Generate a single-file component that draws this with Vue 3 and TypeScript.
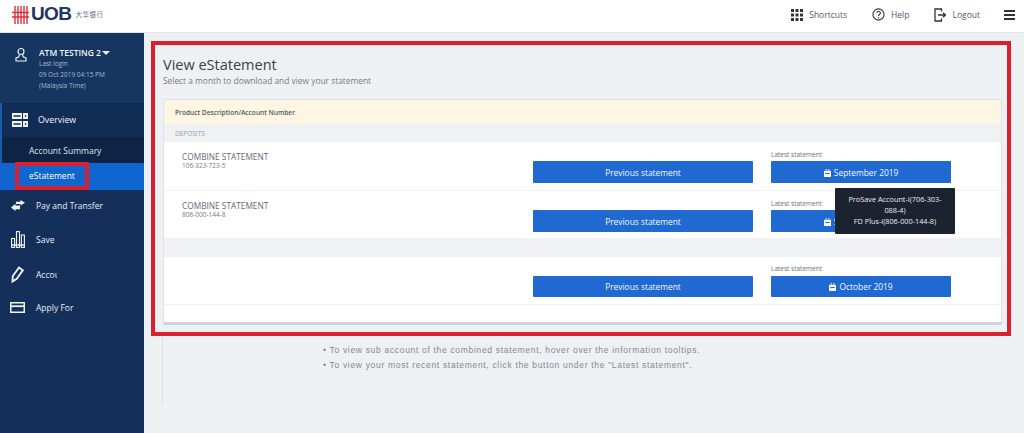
<script setup lang="ts">
interface Row { name: string; num: string; month: string; tip?: boolean }
const rows: Row[] = [
  { name: 'COMBINE STATEMENT', num: '106-323-723-5', month: 'September 2019' },
  { name: 'COMBINE STATEMENT', num: '806-000-144-8', month: 'September 2019', tip: true },
]
const lastRow: Row = { name: '', num: '', month: 'October 2019' }
</script>

<template>
  <div class="page">
    <header class="top">
      <div class="logo">
        <svg width="17" height="18" viewBox="0 0 17 18" class="mark">
          <g stroke="#dc3038" stroke-width="1.400" fill="none">
            <path d="M3 0v18M6 0v18M9 0v18M12 0v18M15 0v18M0 6.500h17M0 11h17" />
          </g>
        </svg>
        <span class="uob">UOB</span>
        <span class="cjk">大华银行</span>
      </div>
      <nav class="tools">
        <span class="tool t1">
          <svg width="12" height="12" viewBox="0 0 12 12" fill="#333">
            <rect x="0" y="0" width="3" height="3" /><rect x="4.500" y="0" width="3" height="3" /><rect x="9" y="0" width="3" height="3" />
            <rect x="0" y="4.500" width="3" height="3" /><rect x="4.500" y="4.500" width="3" height="3" /><rect x="9" y="4.500" width="3" height="3" />
            <rect x="0" y="9" width="3" height="3" /><rect x="4.500" y="9" width="3" height="3" /><rect x="9" y="9" width="3" height="3" />
          </svg>
          Shortcuts
        </span>
        <span class="tool t2">
          <svg width="13" height="13" viewBox="0 0 14 14" fill="none" stroke="#333" stroke-width="1.200">
            <circle cx="7" cy="7" r="6" />
            <path d="M5.200 5.400a1.900 1.900 0 1 1 2.800 1.700c-.7.4-1 .7-1 1.500" />
            <path d="M7 9.800v1.200" />
          </svg>
          Help
        </span>
        <span class="tool t3">
          <svg width="12" height="14" viewBox="0 0 12 14" fill="none" stroke="#333" stroke-width="1.300">
            <path d="M7.500 3.500V1H1v12h6.500v-2.500" />
            <path d="M4 7h7M9 4.800 11.500 7 9 9.200" />
          </svg>
          Logout
        </span>
        <svg class="burger" width="11" height="10" viewBox="0 0 11 10" fill="#333">
          <rect width="11" height="2" /><rect y="4" width="11" height="2" /><rect y="8" width="11" height="2" />
        </svg>
      </nav>
    </header>

    <div class="body">
      <aside class="side">
        <div class="user">
          <svg class="uicon" width="12" height="15" viewBox="0 0 12 15" fill="none" stroke="#e8eef5" stroke-width="1.200">
            <circle cx="6" cy="4.500" r="3" />
            <path d="M4.500 7.500 3.600 10 1 11v3h10v-3l-2.600-1-.9-2.500" />
          </svg>
          <div>
            <div class="uname">ATM TESTING 2<span class="caret"></span></div>
            <div class="umeta">Last login</div>
            <div class="umeta">09 Oct 2019 04:15 PM</div>
            <div class="umeta">(Malaysia Time)</div>
          </div>
        </div>

        <div class="item overview">
          <svg width="16" height="14" viewBox="0 0 16 14">
            <path fill="#eef3f8" d="M0 0h10v6H0zM0 8h10v6H0zM11 0h5v6h-5zM11 8h5v6h-5z" />
            <path fill="#14305a" d="M1.500 2.200h7v1.600h-7zM1.500 10.200h7v1.600h-7zM12.800 2.200h1.500v1.600h-1.500zM12.800 10.200h1.500v1.600h-1.500z" />
          </svg>
          <span>Overview</span>
        </div>
        <div class="sub">Account Summary</div>
        <div class="sub active"><span class="hl">eStatement</span></div>

        <div class="item pay">
          <svg width="14" height="11" viewBox="0 0 14 11" fill="#eef3f8">
            <path d="M5 1.700h4.500V0L14 2.800 9.500 5.500V3.900H5zM9 5.500H4.500V3.800L0 7.500l4.500 3.500V9.300H9z" />
          </svg>
          <span>Pay and Transfer</span>
        </div>
        <div class="item save">
          <svg width="14" height="17" viewBox="0 0 14 17" fill="none" stroke="#eef3f8" stroke-width="1.100">
            <rect x=".6" y="7.500" width="3" height="8.900" />
            <rect x="5.500" y=".6" width="3" height="15.800" />
            <rect x="10.400" y="4" width="3" height="12.400" />
            <path d="M.6 14h12.800" stroke-width="1.400" />
          </svg>
          <span>Save</span>
        </div>
        <div class="item acc">
          <svg width="13" height="17" viewBox="0 0 13 17" fill="none" stroke="#eef3f8" stroke-width="1.900">
            <path d="M1.500 15.500 1.800 10 8 1.500l3.800 2.800-6 8.500z" />
          </svg>
          <span class="clip">Account</span>
        </div>
        <div class="item apply">
          <svg width="15" height="11" viewBox="0 0 15 11" fill="none" stroke="#eef3f8" stroke-width="1.500">
            <rect x=".75" y=".75" width="13.500" height="9.500" />
            <path d="M.7 4.200h13.600" stroke-width="1.800" />
          </svg>
          <span>Apply For</span>
        </div>
      </aside>

      <main class="main">
        <section class="frame">
          <h1>View eStatement</h1>
          <p class="lead">Select a month to download and view your statement</p>

          <div class="card">
            <div class="thead">Product Description/Account Number</div>
            <div class="group">DEPOSITS</div>

            <div v-for="(r, i) in rows" :key="i" class="row">
              <div class="desc">
                <div class="name">{{ r.name }}</div>
                <div class="num">{{ r.num }}</div>
              </div>
              <button class="btn prev">Previous statement</button>
              <div class="latest">
                <div class="lbl">Latest statement</div>
                <button class="btn">
                  <svg class="cal" width="7" height="8" viewBox="0 0 8 9" fill="#fff">
                    <path d="M0 2h8v7H0z" /><path d="M2 0h1v2H2zM5 0h1v2H5z" /><path fill="#2069d0" d="M1.500 4.500h5v1.200h-5z" />
                  </svg>
                  {{ r.month }}
                </button>
                <div v-if="r.tip" class="tip">
                  ProSave Account-i(706-303-<br />088-4)<br />FD Plus-i(806-000-144-8)
                </div>
              </div>
            </div>

            <div class="gap"></div>

            <div class="row last">
              <div class="desc"></div>
              <button class="btn prev">Previous statement</button>
              <div class="latest">
                <div class="lbl">Latest statement</div>
                <button class="btn">
                  <svg class="cal" width="7" height="8" viewBox="0 0 8 9" fill="#fff">
                    <path d="M0 2h8v7H0z" /><path d="M2 0h1v2H2zM5 0h1v2H5z" /><path fill="#2069d0" d="M1.500 4.500h5v1.200h-5z" />
                  </svg>
                  {{ lastRow.month }}
                </button>
              </div>
            </div>
            <div class="foot"></div>
          </div>
        </section>

        <div class="notes">
          <div>• To view sub account of the combined statement, hover over the information tooltips.</div>
          <div>• To view your most recent statement, click the button under the "Latest statement".</div>
        </div>
      </main>
    </div>
  </div>
</template>

<style>
html, body { margin: 0; background: #eef1f4; }
</style>

<style scoped>
.page {
  width: 1024px;
  height: 433px;
  overflow: hidden;
  font-family: "Open Sans", "Noto Sans", sans-serif;
  background: #eef1f4;
  display: flex;
  flex-direction: column;
}
.top {
  height: 33px;
  flex: none;
  background: #fff;
  border-bottom: 1px solid #e2e4e6;
  box-sizing: border-box;
  display: flex;
  align-items: center;
  justify-content: space-between;
  padding: 0 9px 5px 12px;
}
.logo { display: flex; align-items: center; }
.mark { margin-top: 2px; }
.uob {
  font-family: "Liberation Sans", sans-serif;
  font-weight: 700;
  font-size: 19px;
  color: #1f3566;
  margin-left: 2px;
  letter-spacing: -0.6px;
}
.cjk {
  font-family: "Noto Sans CJK SC", sans-serif;
  font-size: 6.500px;
  color: #5a6a85;
  margin-left: 4px;
  letter-spacing: .5px;
}
.tools { display: flex; align-items: center; margin-top: 2px; }
.tool {
  display: flex;
  align-items: center;
  font-size: 8.500px;
  color: #55595f;
}
.tool svg { margin-right: 6px; }
.t1 { margin-right: 25px; }
.t2 { margin-right: 25px; }
.t3 { margin-right: 24px; }
.burger { flex: none; }

.body { flex: 1; display: flex; min-height: 0; }
.side {
  width: 144px;
  flex: none;
  background: #14305a;
  color: #eef3f8;
  display: flex;
  flex-direction: column;
}
.user {
  display: flex;
  gap: 12px;
  padding: 13px 0 0 15px;
  height: 70px;
  box-sizing: border-box;
  background: #163560;
}
.uicon { margin-top: 1px; flex: none; }
.uname { font-size: 8.500px; font-weight: 600; line-height: 11px; margin-top: 1px; color: #f2f5f9; white-space: nowrap; }
.caret {
  display: inline-block;
  border-left: 4px solid transparent;
  border-right: 4px solid transparent;
  border-top: 4px solid #e8eef5;
  margin-left: 1px;
  vertical-align: 1px;
}
.umeta { font-size: 6.500px; line-height: 11px; color: #a8bad0; white-space: nowrap; }
.umeta:first-of-type { margin-top: 3px; }

.item {
  display: flex;
  align-items: center;
  font-size: 8.500px;
  color: #e6ecf3;
}
.item svg { flex: none; }
.overview {
  height: 34px;
  padding-left: 12px;
  background: #122d55;
  color: #eef3f8;
  box-sizing: border-box;
  box-shadow: inset 2px 0 0 #1a5cab;
}
.overview span { margin-left: 10px; font-size: 8.800px; }
.sub {
  height: 26px;
  font-size: 8.500px;
  display: flex;
  align-items: center;
  padding-left: 29px;
  background: #0e2445;
  color: #dde5ee;
}
.sub:not(.active) { box-shadow: inset 2px 0 0 #1a5cab; }
.sub.active {
  background: #1066cf;
  color: #fff;
  padding-left: 15px;
  height: 27px;
}
.hl {
  border: 4px solid #d9202f;
  padding: 2px 11px 3px 10px;
  line-height: 15px;
  height: 15px;
  box-sizing: content-box;
  margin-top: -2px;
  width: 45px;
  white-space: nowrap;
}
.pay { height: 32px; padding-left: 11px; padding-bottom: 2px; box-sizing: border-box; }
.save { height: 35px; padding-left: 11px; }
.acc { height: 34px; padding-left: 11px; }
.apply { height: 33px; padding-left: 10px; }
.pay span { margin-left: 11px; }
.save span { margin-left: 11px; }
.acc span { margin-left: 12px; }
.apply span { margin-left: 11px; }
.clip { display: block; width: 21px; overflow: hidden; white-space: nowrap; }

.main {
  flex: 1;
  min-width: 0;
  padding: 8px 13px 0 7px;
  box-sizing: border-box;
}
.frame {
  border: 4px solid #dc1f2e;
  height: 295px;
  box-sizing: border-box;
  padding: 10px 5px 0 8px;
}
h1 {
  font-weight: 400;
  font-size: 14.500px;
  line-height: 20px;
  margin: 0;
  color: #3b4047;
}
.lead {
  margin: 0;
  font-size: 8.400px;
  line-height: 11px;
  color: #767b82;
}
.card {
  margin-top: 13px;
  background: #fff;
  border: 1px solid #dfe2e6;
  border-bottom: 3px solid #cfd3db;
  height: 226px;
  box-sizing: border-box;
}
.thead {
  height: 24px;
  background: #fdf6e3;
  font-size: 6.600px;
  font-weight: 600;
  color: #55585c;
  display: flex;
  align-items: center;
  padding-left: 11px;
}
.group {
  height: 18px;
  background: #eff1f4;
  font-size: 6.500px;
  color: #9a9fa6;
  display: flex;
  align-items: center;
  padding-left: 11px;
}
.row {
  height: 48px;
  position: relative;
  display: flex;
  border-bottom: 1px solid #f0f1f3;
  box-sizing: border-box;
}
.group + .row { height: 49px; }
.desc { width: 369px; flex: none; padding: 9px 0 0 18px; box-sizing: border-box; }
.name { font-size: 8.300px; line-height: 11px; color: #666a70; }
.num { font-size: 6.500px; line-height: 8px; color: #777b80; }
.btn {
  border: 0;
  border-radius: 1px;
  background: #2069d0;
  color: #f4f7fc;
  font-family: inherit;
  font-size: 8.400px;
  height: 22px;
  padding: 0;
  display: block;
  text-align: center;
}
.prev { width: 220px; margin: 19px 18px 0 0; flex: none; }
.latest { position: relative; width: 180px; flex: none; padding-top: 8px; }
.lbl { font-size: 6.500px; line-height: 10px; color: #6c7076; margin-bottom: 1px; }
.latest .btn { width: 180px; }
.last .prev { height: 21px; }
.last .latest { padding-top: 7px; }
.last .lbl { margin-bottom: 2px; }
.last .latest .btn { height: 21px; }
.cal { vertical-align: -1px; margin-right: 1px; }
.tip {
  position: absolute;
  left: 64px;
  top: -3px;
  width: 120px;
  height: 46px;
  box-sizing: border-box;
  padding: 6px 4px 0;
  background: #1b2230;
  border-radius: 1px;
  color: #eceef2;
  font-size: 7.300px;
  line-height: 11px;
  text-align: center;
  z-index: 2;
  white-space: nowrap;
}
.gap { height: 18px; background: #eff1f4; }
.foot { height: 17px; }

.notes {
  margin: 0 0 0 11px;
  padding: 7px 0 0 160px;
  height: 69px;
  box-sizing: border-box;
  border-left: 1px solid #dcdfe3;
  font-family: "Liberation Sans", sans-serif;
  font-size: 8.500px;
  line-height: 14.500px;
  letter-spacing: .68px;
  color: #85888d;
}
</style>
